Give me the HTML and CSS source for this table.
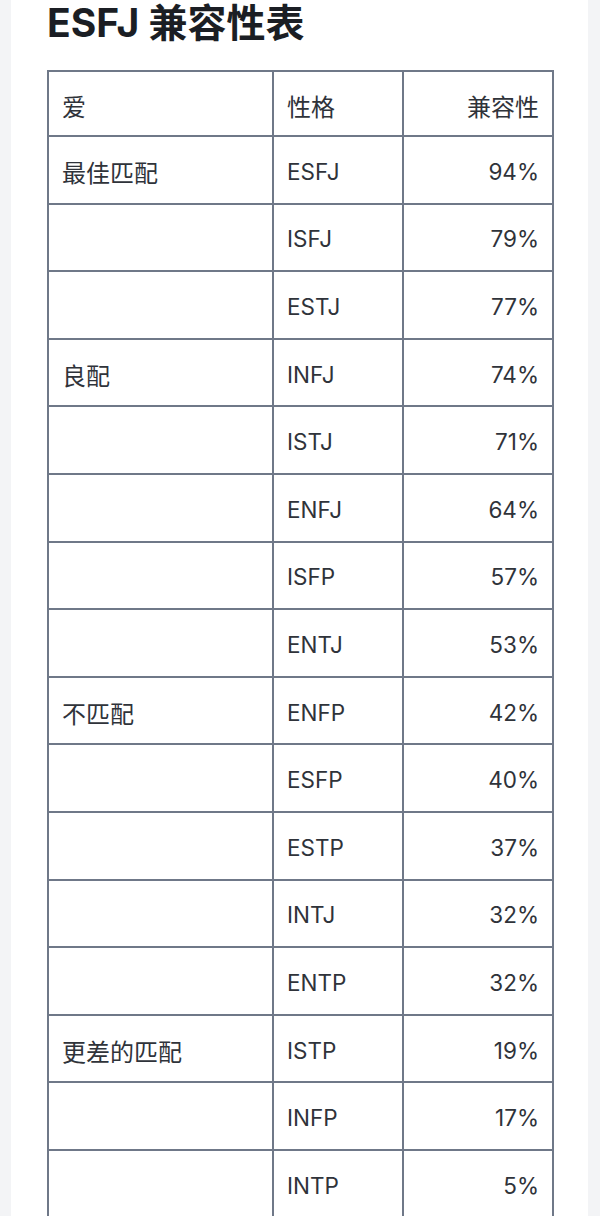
FILE: index.html
```html
<!DOCTYPE html>
<html lang="zh">
<head>
<meta charset="utf-8">
<link rel="stylesheet" href="styles.css">
</head>
<body>
<main class="page">
  <h1 class="title">ESFJ 兼容性表</h1>
  <table class="compat">
    <thead>
      <tr><th class="zh">爱</th><th class="zh">性格</th><th class="num zh">兼容性</th></tr>
    </thead>
    <tbody>
      <tr><td class="zh">最佳匹配</td><td>ESFJ</td><td class="num">94%</td></tr>
      <tr><td></td><td>ISFJ</td><td class="num">79%</td></tr>
      <tr><td></td><td>ESTJ</td><td class="num">77%</td></tr>
      <tr><td class="zh">良配</td><td>INFJ</td><td class="num">74%</td></tr>
      <tr><td></td><td>ISTJ</td><td class="num">71%</td></tr>
      <tr><td></td><td>ENFJ</td><td class="num">64%</td></tr>
      <tr><td></td><td>ISFP</td><td class="num">57%</td></tr>
      <tr><td></td><td>ENTJ</td><td class="num">53%</td></tr>
      <tr><td class="zh">不匹配</td><td>ENFP</td><td class="num">42%</td></tr>
      <tr><td></td><td>ESFP</td><td class="num">40%</td></tr>
      <tr><td></td><td>ESTP</td><td class="num">37%</td></tr>
      <tr><td></td><td>INTJ</td><td class="num">32%</td></tr>
      <tr><td></td><td>ENTP</td><td class="num">32%</td></tr>
      <tr><td class="zh">更差的匹配</td><td>ISTP</td><td class="num">19%</td></tr>
      <tr><td></td><td>INFP</td><td class="num">17%</td></tr>
      <tr><td></td><td>INTP</td><td class="num">5%</td></tr>
    </tbody>
  </table>
</main>
</body>
</html>
```

FILE: styles.css
```css
html, body {
  margin: 0;
  padding: 0;
  background: #f3f4f6;
}
body {
  font-family: "Inter", "Noto Sans CJK SC", sans-serif;
  color: #2f333a;
}
.page {
  margin: 0 12px 0 11px;
  background: #ffffff;
  padding: 0 35px 40px 36px;
  min-height: 1216px;
  box-sizing: border-box;
}
.title {
  margin: 0;
  padding-top: 0;
  font-size: 39px;
  line-height: 46px;
  font-weight: 700;
  color: #1b1e24;
  letter-spacing: 0;
}
.compat {
  margin-top: 24px;
  width: 507px;
  border-collapse: collapse;
  table-layout: fixed;
  font-size: 22.5px;
}
.compat th,
.compat td {
  border: 2px solid #6f7888;
  padding: 3px 13px 0;
  text-align: left;
  font-weight: 400;
  height: 67.6px;
  box-sizing: border-box;
}
.compat th {
  height: 65px;
}
.compat .zh {
  font-size: 24px;
}
.compat th:nth-child(1), .compat td:nth-child(1) { width: 225px; }
.compat th:nth-child(2), .compat td:nth-child(2) { width: 130px; }
.compat .num { text-align: right; }
```
